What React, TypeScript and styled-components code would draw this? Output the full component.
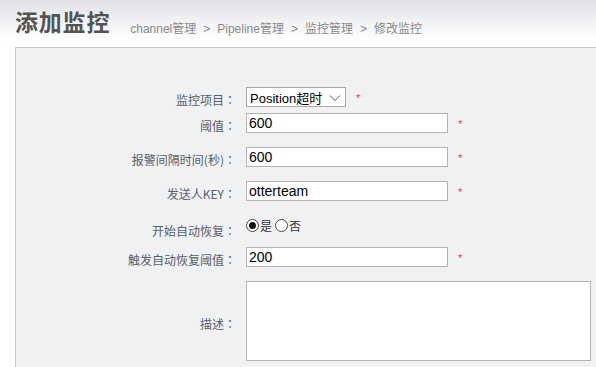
import React from 'react';
import styled, { createGlobalStyle } from 'styled-components';

const GlobalStyle = createGlobalStyle`
  html, body {
    margin: 0;
    padding: 0;
    background: #fff;
    overflow: hidden;
    font-family: "Liberation Sans", "Noto Sans CJK SC", sans-serif;
  }
`;

const Header = styled.div`
  height: 47px;
  display: flex;
  align-items: center;
  padding-left: 15px;
  background: linear-gradient(to bottom, #dfe1e5 0%, #f1f2f4 45%, #ffffff 88%);
`;

const Title = styled.h1`
  margin: 0;
  font-family: "Noto Sans CJK SC", sans-serif;
  font-size: 23px;
  font-weight: bold;
  color: #545454;
  letter-spacing: 0.8px;
  line-height: 1;
  margin-top: -4px;
`;

const Crumbs = styled.div`
  margin-left: 20px;
  margin-top: 8px;
  font-size: 12px;
  color: #8a8a8a;
  font-family: "Liberation Sans", "Noto Sans CJK SC", sans-serif;
`;

const Sep = styled.span`
  margin: 0 7px;
`;

const Panel = styled.div`
  margin-left: 15px;
  width: 640px;
  height: 340px;
  border-top: 1px solid #c9c9c9;
  border-left: 1px solid #c9c9c9;
  background: #f0f1f3;
  padding-top: 39px;
  box-sizing: border-box;
`;

const Row = styled.div<{ $gap?: number; $height?: number }>`
  display: flex;
  align-items: center;
  margin-top: ${p => p.$gap ?? 0}px;
  height: ${p => p.$height ?? 20}px;
`;

const Label = styled.div`
  width: 220px;
  margin-right: 10px;
  padding-top: 4px;
  text-align: right;
  font-family: "Noto Sans CJK SC", sans-serif;
  font-size: 12px;
  color: #58606a;
  white-space: nowrap;
`;

/* full-width colon with the dot centred, as in the original font */
const Colon = styled.span`
  font-family: "Noto Sans CJK TC", sans-serif;
`;

const Field = styled.div<{ $top?: boolean }>`
  display: flex;
  align-items: ${p => (p.$top ? 'flex-start' : 'center')};
  align-self: ${p => (p.$top ? 'stretch' : 'center')};
`;

const TextInput = styled.input`
  width: 202px;
  height: 20px;
  box-sizing: border-box;
  border: 1px solid #b3b3b3;
  background: #fff;
  padding: 0 2px;
  font-family: "Liberation Sans", sans-serif;
  font-size: 14px;
  color: #000;
  outline: none;
`;

const SelectBox = styled.div`
  position: relative;
  width: 100px;
  height: 20px;
  box-sizing: border-box;
  border: 1px solid #aaa;
  background: #fff;
  display: flex;
  align-items: center;
  padding-left: 3px;
  font-family: "Liberation Sans", "Noto Sans CJK SC", sans-serif;
  font-size: 13px;
  color: #000;
`;

const Chevron = styled.svg`
  position: absolute;
  right: 4px;
  top: 6px;
`;

const Star = styled.span`
  margin-left: 10px;
  color: #ea3a4a;
  font-size: 11px;
  line-height: 1;
  margin-top: 2px;
`;

const RadioGroup = styled.div`
  display: flex;
  align-items: center;
  margin-top: 2px;
  font-family: "Noto Sans CJK SC", sans-serif;
  font-size: 12px;
  color: #333;
`;

const Radio = styled.span<{ $checked?: boolean }>`
  width: 11px;
  height: 11px;
  border: 1px solid #444;
  border-radius: 50%;
  background: #fff;
  display: inline-flex;
  align-items: center;
  justify-content: center;
  margin-right: 1px;
  &::after {
    content: '';
    width: 7px;
    height: 7px;
    border-radius: 50%;
    background: ${p => (p.$checked ? '#111' : 'transparent')};
  }
`;

const RadioText = styled.span`
  margin-right: 3px;
`;

const TextArea = styled.textarea`
  width: 345px;
  height: 80px;
  box-sizing: border-box;
  border: 1px solid #b3b3b3;
  background: #fff;
  resize: none;
  outline: none;
`;

const FieldLabel = ({ text }: { text: string }) => (
  <Label>
    {text}
    <Colon>：</Colon>
  </Label>
);

export default function App() {
  return (
    <>
      <GlobalStyle />
      <Header>
        <Title>添加监控</Title>
        <Crumbs>
          channel管理<Sep>&gt;</Sep>Pipeline管理<Sep>&gt;</Sep>监控管理<Sep>&gt;</Sep>修改监控
        </Crumbs>
      </Header>
      <Panel>
        <Row>
          <FieldLabel text="监控项目" />
          <Field>
            <SelectBox>
              Position超时
              <Chevron width="12" height="8" viewBox="0 0 12 8">
                <path d="M1 1.5 L6 6.5 L11 1.5" fill="none" stroke="#555" strokeWidth="1" />
              </Chevron>
            </SelectBox>
            <Star>*</Star>
          </Field>
        </Row>
        <Row $gap={6}>
          <FieldLabel text="阈值" />
          <Field>
            <TextInput defaultValue="600" />
            <Star>*</Star>
          </Field>
        </Row>
        <Row $gap={14}>
          <FieldLabel text="报警间隔时间(秒)" />
          <Field>
            <TextInput defaultValue="600" />
            <Star>*</Star>
          </Field>
        </Row>
        <Row $gap={14}>
          <FieldLabel text="发送人KEY" />
          <Field>
            <TextInput defaultValue="otterteam" />
            <Star>*</Star>
          </Field>
        </Row>
        <Row $gap={14} $height={26}>
          <FieldLabel text="开始自动恢复" />
          <Field $top>
            <RadioGroup>
              <Radio $checked />
              <RadioText>是</RadioText>
              <Radio />
              <RadioText>否</RadioText>
            </RadioGroup>
          </Field>
        </Row>
        <Row $gap={6}>
          <FieldLabel text="触发自动恢复阈值" />
          <Field>
            <TextInput defaultValue="200" />
            <Star>*</Star>
          </Field>
        </Row>
        <Row $gap={14} $height={80}>
          <FieldLabel text="描述" />
          <Field>
            <TextArea />
          </Field>
        </Row>
      </Panel>
    </>
  );
}
